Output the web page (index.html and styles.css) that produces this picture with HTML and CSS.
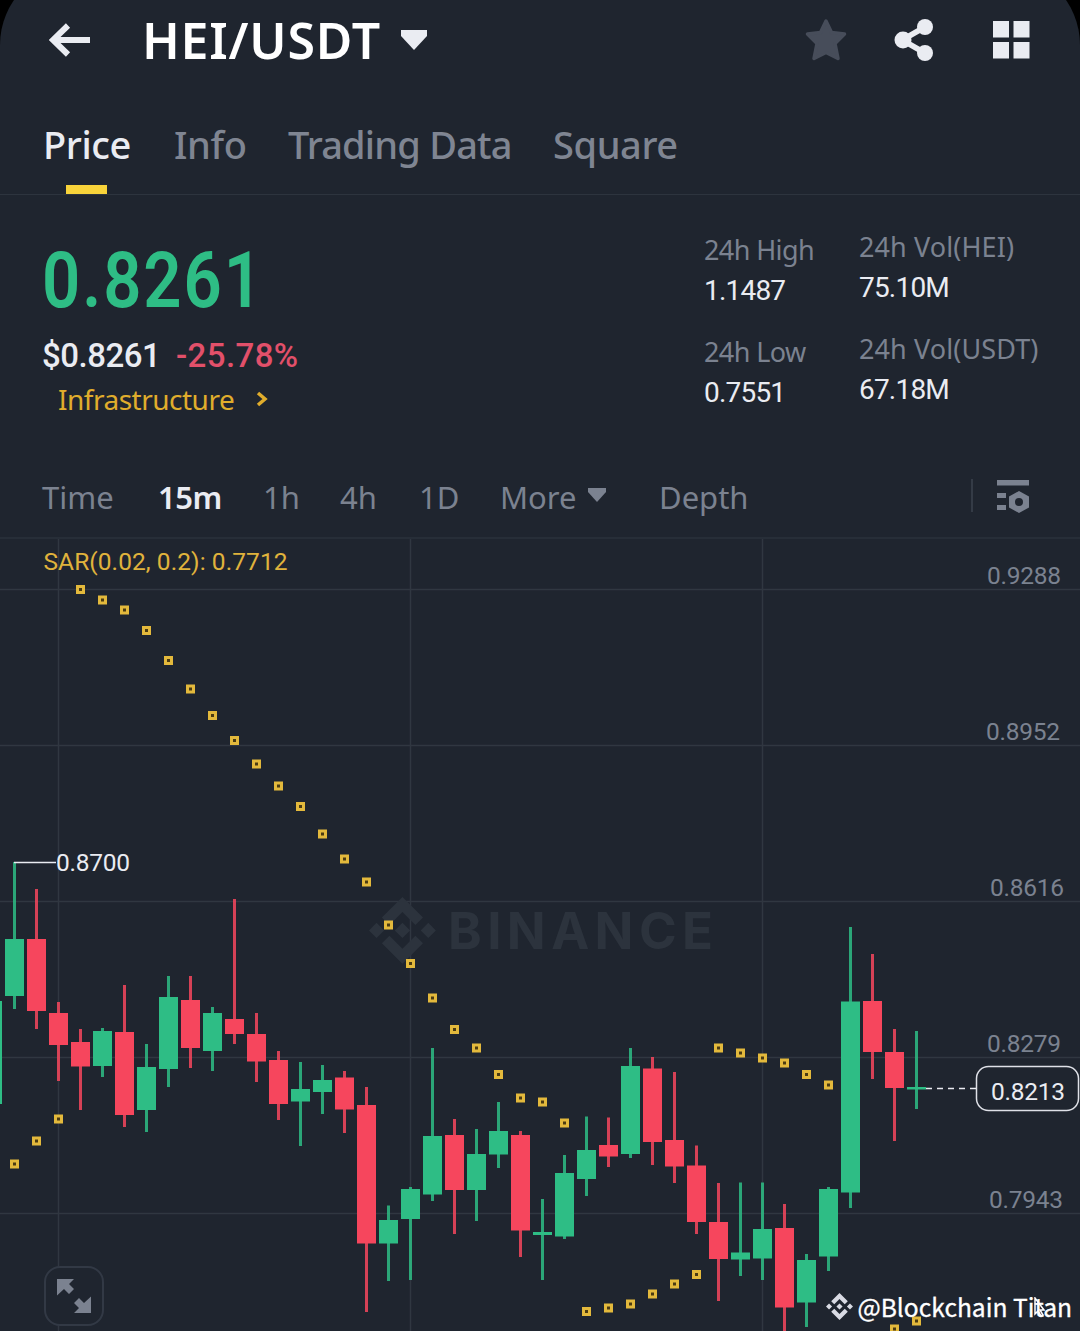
FILE: index.html
```html
<!DOCTYPE html>
<html lang="en">
<head>
  <meta charset="UTF-8" />
  <meta name="viewport" content="width=device-width, initial-scale=1.0"/>
  <title>HEI/USDT</title>
  <link rel="stylesheet" href="styles.css">
</head>
<body>
  <div class="app">
    <header class="topbar">
      <svg class="back" viewBox="0 0 42 34"><path d="M19 2.500L4 17l15 14.500M4 17h37" fill="none" stroke="#eaecf2" stroke-width="6"/></svg>
      <h1>HEI/USDT</h1>
      <svg class="caret" viewBox="0 0 26 20"><path d="M0 0h26v6L13 20 0 6z" fill="#eaecf2"/></svg>
      <svg class="star" viewBox="0 0 42 44"><path d="M21 3l5.500 11.500 13 1.500-9.500 9.500 3 15L21 34.500 9 40.500l3-15L2.500 16l13-1.500z" fill="#474d5a" stroke="#474d5a" stroke-width="3.500" stroke-linejoin="round"/></svg>
      <svg class="share" viewBox="0 0 40 44"><path d="M31 9L8 22l23 13" fill="none" stroke="#eaecf2" stroke-width="5.500"/><g fill="#eaecf2"><circle cx="31" cy="9" r="8"/><circle cx="9" cy="22" r="8.500"/><circle cx="31" cy="35" r="8"/></g></svg>
      <svg class="tiles" viewBox="0 0 38 38"><path d="M1 0h16v16.500H1zM21.500 0h16v16.500h-16zM1 21h16v16.500H1zM21.500 21h16v16.500h-16z" fill="#eaecf2"/></svg>
    </header>

    <nav class="tabs">
      <a class="tab active">Price</a>
      <a class="tab info">Info</a>
      <a class="tab trading">Trading Data</a>
      <a class="tab square">Square</a>
    </nav>

    <section class="summary">
      <div class="quote">
        <div class="price">0.8261</div>
        <div class="change"><span class="usd">$0.8261</span><span class="down">-25.78%</span></div>
        <div class="category">
          <span>Infrastructure</span>
          <svg viewBox="0 0 12 16"><path d="M2 2l7 6-7 6" fill="none" stroke="#e0ad2c" stroke-width="3.500"/></svg>
        </div>
      </div>
      <dl class="stats">
        <dt>24h High</dt><dd>1.1487</dd>
        <dt>24h Low</dt><dd>0.7551</dd>
      </dl>
      <dl class="stats volume">
        <dt>24h Vol(HEI)</dt><dd>75.10M</dd>
        <dt>24h Vol(USDT)</dt><dd>67.18M</dd>
      </dl>
    </section>

    <nav class="intervals">
      <span class="time">Time</span>
      <span class="m15 active">15m</span>
      <span class="h1">1h</span>
      <span class="h4">4h</span>
      <span class="d1">1D</span>
      <span class="more">More <svg viewBox="0 0 18 14"><path d="M0 0h18v4l-9 10-9-10z" fill="#7b8290"/></svg></span>
      <span class="depth">Depth</span>
      <svg class="settings" viewBox="0 0 32 33">
        <path d="M0 0h32v5.500H0zM0 13h9v5H0zM0 25h9v5H0z" fill="#7b8290"/>
        <path fill-rule="evenodd" d="M22 11l10 5.500v11L22 33l-10-5.500v-11zM22 18a4 4 0 1 0 0 8 4 4 0 1 0 0-8z" fill="#7b8290"/>
      </svg>
    </nav>

    <section class="chart">
      <svg class="plot" viewBox="0 539 1080 792">
        <g id="grid" class="grid"></g>
        <g class="watermark">
          <path transform="translate(369 897) scale(.528)" d="M38.730 53.200l24.590-24.580 24.600 24.600 14.300-14.310L63.320 0l-38.900 38.900zM0 63.310l14.300-14.310 14.310 14.310-14.310 14.300zM38.730 73.410l24.590 24.590 24.600-24.600 14.310 14.290-38.900 38.910-38.910-38.880zM98 63.310l14.300-14.310 14.310 14.300-14.310 14.320zM77.830 63.300L63.320 48.780 48.810 63.280l14.510 14.500z"/>
          <text x="448" y="949" textLength="265">BINANCE</text>
        </g>
        <g id="candles"></g>
        <g id="sar" class="sar"></g>
        <text class="indicator" x="43.500" y="570" textLength="244">SAR(0.02, 0.2): 0.7712</text>
        <path class="leader" d="M14 862.500H56"/>
        <text class="high" x="56" y="871" textLength="74">0.8700</text>
        <path class="last-line" d="M926 1088.500H976"/>
        <rect class="last-box" x="976.500" y="1066.500" width="102" height="44" rx="12"/>
        <text class="high" x="991" y="1100" textLength="74">0.8213</text>
        <g id="axis" class="axis"></g>
      </svg>

      <button class="expand">
        <svg viewBox="0 0 34 34"><path d="M0 0h17l-5 5 5 5-5 5-5-5-7 6.500zM34 34H17l5-5-5-5 5-5 5 5 7-6.500z" fill="#7b8290"/></svg>
      </button>

      <div class="author">
        <svg class="logo" viewBox="0 0 126.610 126.610"><path d="M38.730 53.200l24.590-24.580 24.600 24.600 14.300-14.310L63.320 0l-38.900 38.900zM0 63.310l14.300-14.310 14.310 14.310-14.310 14.300zM38.730 73.410l24.590 24.590 24.600-24.600 14.310 14.290-38.900 38.910-38.910-38.880zM98 63.310l14.300-14.310 14.310 14.300-14.310 14.320zM77.830 63.300L63.320 48.780 48.810 63.280l14.510 14.500z" fill="#d9dbe4"/></svg>
        <span>@Blockchain Titan</span>
        <svg class="pointer" viewBox="0 0 12 20"><path d="M2 1v16l3-3 3 5 2-1-3-5h4z" fill="none" stroke="#fff" stroke-width="1.500"/></svg>
      </div>
    </section>
  </div>

  <script src="chart.js"></script>
</body>
</html>
```
FILE: styles.css
```css
body {
  margin: 0;
  background: #000;
  color: #eaecf2;
  font-family: "Noto Sans", sans-serif;
  overflow: hidden;
}

.app {
  height: 1331px;
  margin-top: -34px;
  padding-top: 34px;
  background: #1f252f;
  border-radius: 79px 79px 0 0;
  overflow: hidden;
}

svg {
  display: block;
  flex: none;
}

.topbar {
  display: flex;
  align-items: center;
  height: 80px;
  padding: 0 50px 0 49px;
}

.back {
  width: 42px;
  height: 34px;
}

h1 {
  width: 239px;
  margin: 0 0 0 51px;
  font-size: 50px;
  line-height: 82px;
  font-weight: 600;
  letter-spacing: 0.8px;
  color: #fff;
  white-space: nowrap;
}

.caret {
  width: 26px;
  margin-left: 20px;
}

.star {
  width: 42px;
  margin-left: auto;
}

.share {
  width: 40px;
  margin: 0 58px 0 47px;
}

.tiles {
  width: 38px;
}

.tabs {
  display: flex;
  height: 70px;
  padding: 44px 0 0 43px;
  border-bottom: 1px solid #2d343e;
  font-size: 38px;
  line-height: 40px;
  font-weight: 500;
  letter-spacing: -0.4px;
  color: #7f8592;
  white-space: nowrap;
}

.tab {
  position: relative;
}

.tab.active {
  width: 131px;
  color: #eaecf2;
}

.tab.active::after {
  content: "";
  position: absolute;
  left: 23px;
  top: 61px;
  width: 41px;
  height: 9px;
  background: #f8d33a;
}

.info {
  width: 114px;
}

.trading {
  width: 265px;
  letter-spacing: -0.8px;
}

.summary {
  display: flex;
  height: 262px;
}

.quote {
  width: 662px;
  padding: 46px 0 0 42px;
}

.price {
  font-family: Roboto, sans-serif;
  font-size: 77px;
  line-height: 80px;
  font-weight: 600;
  letter-spacing: 2.2px;
  color: #2ebd85;
  transform: scaleX(0.87);
  transform-origin: left;
}

.change {
  display: flex;
  margin-top: 13px;
  font-family: Roboto, sans-serif;
  font-size: 33px;
  line-height: 44px;
  font-weight: 500;
}

.usd {
  width: 134px;
  letter-spacing: -0.5px;
}

.down {
  letter-spacing: 0.4px;
  color: #e2506a;
}

.category {
  display: flex;
  align-items: center;
  gap: 22px;
  padding-left: 16px;
  font-size: 28px;
  line-height: 42px;
  letter-spacing: -0.5px;
  color: #e0ad2c;
}

.category svg {
  width: 12px;
}

.stats {
  width: 155px;
  margin: 35px 0 0;
  line-height: 40px;
  white-space: nowrap;
}

.stats dt {
  font-size: 27px;
  letter-spacing: -0.6px;
  color: #7b8290;
}

.stats dd {
  margin: 1px 0 21px;
  font-family: Roboto, sans-serif;
  font-size: 28px;
  letter-spacing: -0.8px;
}

.volume {
  margin-top: 32px;
}

.volume dt {
  letter-spacing: 0.1px;
}

.intervals {
  display: flex;
  align-items: center;
  height: 80px;
  padding: 0 51px 0 42px;
  border-bottom: 2px solid #272e38;
  font-size: 31px;
  color: #7b8290;
  white-space: nowrap;
}

.time {
  width: 116px;
}

.intervals .active {
  color: #eaecf2;
  font-weight: 600;
  letter-spacing: -0.5px;
}

.m15 {
  width: 105px;
}

.h1 {
  width: 77px;
}

.h4 {
  width: 79px;
}

.d1 {
  width: 81px;
}

.more {
  display: flex;
  align-items: center;
  gap: 12px;
  width: 159px;
}

.more svg {
  width: 18px;
  margin-left: -1px;
  margin-top: -4px;
}

.settings {
  width: 32px;
  margin-top: -2px;
}

.depth {
  flex: 1;
}

.depth::after {
  content: "";
  float: right;
  width: 2px;
  height: 33px;
  margin: 3px 24px 0 0;
  background: #343b46;
}

.chart {
  position: relative;
  height: 792px;
}

.plot {
  width: 1080px;
  height: 792px;
  font-family: Roboto, sans-serif;
  font-size: 24.5px;
}

.grid {
  stroke: #303741;
  stroke-width: 1.5;
}

.watermark {
  fill: #2c333d;
  font-family: Inter, sans-serif;
  font-size: 51px;
  font-weight: 700;
}

.up {
  fill: #2ebd85;
}

.fall {
  fill: #f6465d;
}

.sar {
  fill: #4b3b12;
  stroke: #e3b93c;
  stroke-width: 3;
}

.indicator {
  fill: #e0b33c;
}

.high {
  fill: #eaecf2;
}

.axis {
  fill: #7b8290;
}

.leader,
.last-line {
  stroke: #eaecf2;
  stroke-width: 1.5;
}

.last-line {
  stroke-dasharray: 6 5;
}

.last-box {
  fill: #1f252f;
  stroke: #dfe1e8;
  stroke-width: 1.5;
}

.expand {
  position: absolute;
  left: 44px;
  bottom: 5px;
  display: flex;
  align-items: center;
  justify-content: center;
  width: 60px;
  height: 60px;
  padding: 0;
  border: 2px solid #323945;
  border-radius: 16px;
  background: #1f252f;
}

.expand svg {
  width: 34px;
}

.author {
  position: absolute;
  right: 8px;
  bottom: 5px;
  display: flex;
  align-items: center;
  gap: 4px;
  font-family: "Noto Sans CJK SC", sans-serif;
  font-size: 24.6px;
  line-height: 40px;
  font-weight: 400;
  color: #fff;
  -webkit-text-stroke: 0.3px #fff;
  white-space: nowrap;
}

.logo {
  width: 27px;
}

.pointer {
  position: absolute;
  right: 27px;
  top: 11px;
  width: 12px;
}
```
FILE: chart.js
```js
const STEP = 22;
const FIRST = 14.5;

// direction, high, body top, body bottom, low
const candles = [
  ['u', 862, 939, 996, 1009], ['d', 889, 939, 1011, 1029], ['d', 1002, 1013, 1045, 1081],
  ['d', 1029, 1042, 1066.5, 1110], ['u', 1028, 1031, 1066, 1077], ['d', 985, 1032, 1115, 1127],
  ['u', 1044, 1067, 1110, 1132], ['u', 976, 997, 1069, 1087], ['d', 976, 1000, 1048, 1068],
  ['u', 1007, 1013, 1051, 1071], ['d', 899, 1019, 1034, 1044], ['d', 1013, 1034, 1061.5, 1082],
  ['d', 1051, 1060, 1104, 1120], ['u', 1062, 1089, 1101.5, 1146], ['u', 1065, 1080, 1092, 1114],
  ['d', 1071, 1077.5, 1109.5, 1133], ['d', 1087, 1105, 1243.5, 1312], ['u', 1205.5, 1220, 1243.5, 1281],
  ['u', 1187, 1189, 1219, 1280], ['u', 1048, 1136, 1194.5, 1201], ['d', 1119, 1135, 1190, 1234],
  ['u', 1129, 1154, 1190, 1221], ['u', 1102, 1131, 1154.5, 1168], ['d', 1131, 1135, 1230.5, 1257],
  ['u', 1199, 1232, 1235, 1280], ['u', 1155, 1173, 1236.5, 1239], ['u', 1116.5, 1150, 1179, 1196],
  ['d', 1117.5, 1145, 1156.5, 1167], ['u', 1048, 1066, 1154, 1158], ['d', 1057, 1068.5, 1142, 1165],
  ['d', 1072, 1140, 1166.5, 1183], ['d', 1145.5, 1165.5, 1222, 1234], ['d', 1183, 1222, 1259, 1301],
  ['u', 1182.5, 1252.5, 1259.5, 1276], ['u', 1182.5, 1229, 1258.5, 1280], ['d', 1204, 1228, 1307.5, 1331],
  ['u', 1254, 1260, 1302.5, 1327], ['u', 1187, 1189, 1256.5, 1271], ['u', 927, 1001.5, 1192.5, 1208],
  ['d', 954, 1001, 1052, 1079], ['d', 1029, 1052, 1088, 1141], ['u', 1031, 1087, 1089.5, 1109]
];

const sar = [
  1164, 1141, 1119, 589.5, 600, 610, 630.5, 660.5, 689, 715.5, 740.5, 764, 786, 806.5,
  834, 859, 882, 925, 963.5, 998, 1029.5, 1048, 1074.5, 1098, 1102, 1123,
  1311.5, 1308, 1304, 1294, 1284, 1274.5, 1048, 1053, 1058, 1063, 1074.5, 1085,
  null, null, 1329, 1321
];

const labels = [
  ['0.9288', 987, 584], ['0.8952', 986, 740], ['0.8616', 990, 896],
  ['0.8279', 987, 1052], ['0.7943', 989, 1208]
];

let grid = '';
[589.5, 745.5, 901.5, 1057.5, 1213.5].forEach(y => grid += `<path d="M0 ${y}H1080"/>`);
[58.5, 410.5, 762.5].forEach(x => grid += `<path d="M${x} 539V1331"/>`);
document.getElementById('grid').innerHTML = grid;

// the candle cut off by the left edge
let bars = '<rect class="up" x="0" y="1001" width="2" height="103"/>';
candles.forEach(([dir, high, top, bottom, low], i) => {
  const x = FIRST + i * STEP;
  bars += `<g class="${dir === 'u' ? 'up' : 'fall'}">
    <rect x="${x - 1.5}" y="${high}" width="3" height="${low - high}" opacity=".85"/>
    <rect x="${x - 9.5}" y="${top}" width="19" height="${bottom - top}"/></g>`;
});
document.getElementById('candles').innerHTML = bars;

document.getElementById('sar').innerHTML = sar.map((y, i) =>
  y === null ? '' : `<rect x="${FIRST + i * STEP - 3}" y="${y - 3}" width="6" height="6"/>`
).join('');

document.getElementById('axis').innerHTML = labels.map(([text, x, y]) =>
  `<text x="${x}" y="${y}" textLength="74">${text}</text>`
).join('');
```
